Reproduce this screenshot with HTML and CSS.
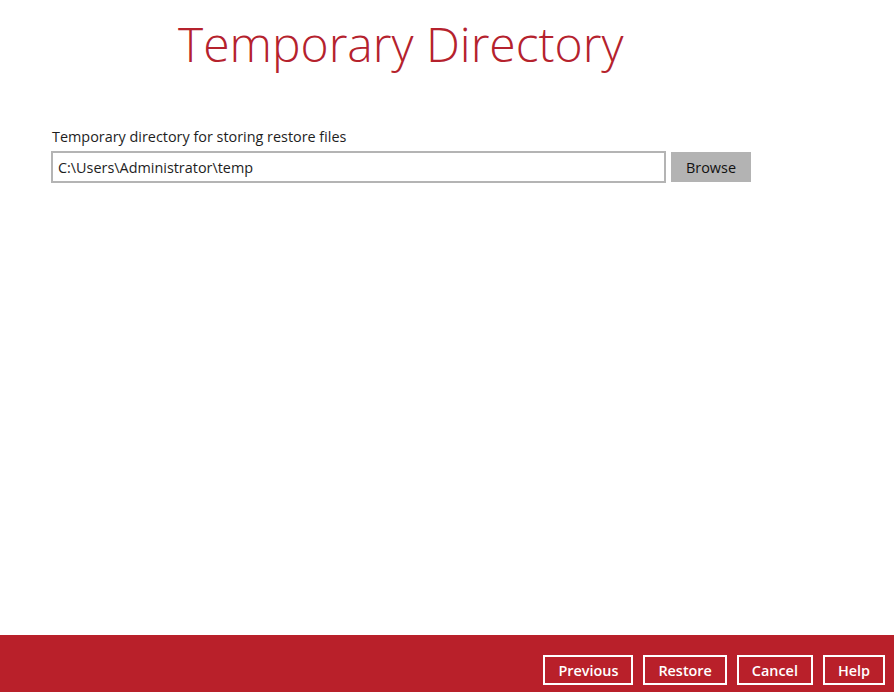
FILE: index.html
```html
<!DOCTYPE html>
<html>
<head>
<meta charset="utf-8">
<link rel="stylesheet" href="styles.css">
</head>
<body>
<div class="page">
  <main class="content">
    <h1 class="title">Temporary Directory</h1>
    <div class="field">
      <label class="label">Temporary directory for storing restore files</label>
      <div class="row">
        <input class="path" type="text" value="C:\Users\Administrator\temp">
        <button class="browse">Browse</button>
      </div>
    </div>
  </main>
  <footer class="footer">
    <button class="fbtn">Previous</button>
    <button class="fbtn">Restore</button>
    <button class="fbtn">Cancel</button>
    <button class="fbtn">Help</button>
  </footer>
</div>
</body>
</html>
```
FILE: styles.css
```css
html, body {
  margin: 0;
  padding: 0;
  background: #ffffff;
  font-family: "Open Sans", "Liberation Sans", sans-serif;
}
.page {
  width: 894px;
  height: 692px;
  display: flex;
  flex-direction: column;
}
.content {
  flex: 1;
}
.title {
  margin: 0;
  padding: 12px 0 0 178px;
  font-size: 48px;
  font-weight: 300;
  line-height: 64px;
  color: #b5222d;
  letter-spacing: 0;
}
.field {
  margin: 51px 0 0 51px;
}
.label {
  display: block;
  padding-left: 1px;
  font-size: 14.4px;
  line-height: 20px;
  color: #1e1e1e;
}
.row {
  display: flex;
  align-items: center;
  margin-top: 4px;
  gap: 5px;
}
.path {
  box-sizing: border-box;
  width: 615px;
  height: 32px;
  margin: 0;
  border: 2px solid #b4b4b4;
  padding: 0 5px;
  font-family: "Open Sans", "Liberation Sans", sans-serif;
  font-size: 14.4px;
  color: #1e1e1e;
  outline: none;
}
.browse {
  box-sizing: border-box;
  width: 80px;
  height: 30px;
  margin: 0;
  border: none;
  background: #b3b3b3;
  font-family: "Open Sans", "Liberation Sans", sans-serif;
  font-size: 14.4px;
  font-weight: 500;
  color: #111111;
  padding: 0;
}
.footer {
  height: 57px;
  background: #b9202a;
  display: flex;
  justify-content: flex-end;
  align-items: flex-start;
  gap: 10px;
  padding: 20px 9px 0 0;
  box-sizing: border-box;
}
.fbtn {
  box-sizing: border-box;
  height: 30px;
  padding: 0 13px;
  margin: 0;
  border: 2px solid #ffffff;
  background: transparent;
  color: #ffffff;
  font-family: "Open Sans", "Liberation Sans", sans-serif;
  font-size: 14.4px;
  font-weight: 600;
}
.fbtn.narrow {
  padding: 0 12.5px;
}
```
